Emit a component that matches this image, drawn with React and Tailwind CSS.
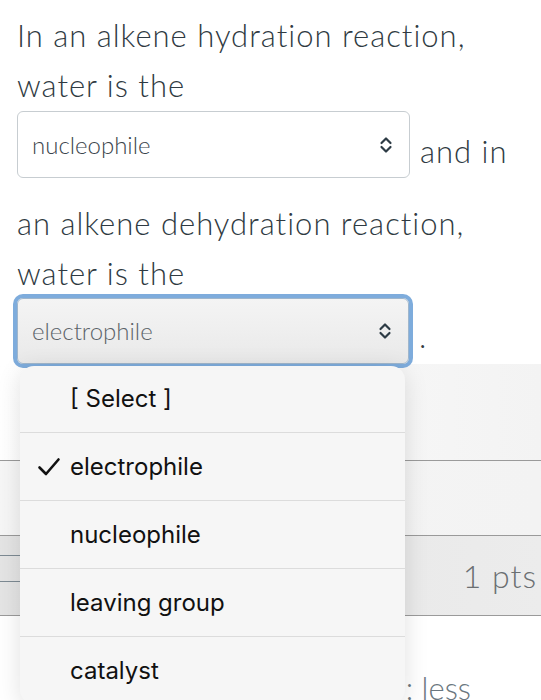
import { useState } from "react";

function Chevrons() {
    return (
        <svg width="16" height="20" viewBox="0 0 16 20" fill="none">
            <path d="M3.5 8 L8 3.5 L12.5 8" stroke="#2d3b45" strokeWidth="2.2" strokeLinecap="round" strokeLinejoin="round" />
            <path d="M3.5 12 L8 16.5 L12.5 12" stroke="#2d3b45" strokeWidth="2.2" strokeLinecap="round" strokeLinejoin="round" />
        </svg>
    );
}

function Check() {
    return (
        <svg width="24" height="20" viewBox="0 0 24 20" fill="none">
            <path d="M2.5 10.5 L9 17 L21.5 2.5" stroke="#111" strokeWidth="2.6" strokeLinecap="round" strokeLinejoin="round" />
        </svg>
    );
}

const options = ["[ Select ]", "electrophile", "nucleophile", "leaving group", "catalyst"];

export default function App() {
    const [selected] = useState("electrophile");
    const line = "text-[31px] leading-[50px] font-light tracking-[1px]";

    return (
        <div className="relative w-[541px] h-[700px] overflow-hidden bg-white font-['Lato',sans-serif] text-[#2f3a42]">
            {/* Question text */}
            <div className="px-[17px] pt-[10px]">
                <div className={line}>In an alkene hydration reaction,</div>
                <div className={line}>water is the</div>
                <div className="flex items-end mt-[1px]">
                    <div className="flex items-center justify-between w-[393px] h-[67px] pl-[14px] pr-[15px] bg-white border border-[#c7cdd1] rounded-[6px]">
                        <span className="text-[24px] font-light text-[#3b454c]">nucleophile</span>
                        <Chevrons />
                    </div>
                    <span className={`ml-[10px] mb-[2px] ${line}`}>and in</span>
                </div>
                <div className={`mt-[20px] ${line}`}>an alkene dehydration reaction,</div>
                <div className={line}>water is the</div>
                <div className="flex items-end">
                    <div className="flex items-center justify-between w-[392px] h-[66px] pl-[14px] pr-[15px] bg-gradient-to-b from-[#f4f4f4] to-[#e9e9e9] border border-[#9fb6cc] rounded-[6px] ring-4 ring-[#7eacdc]">
                        <span className="text-[24px] font-light text-[#5b6369]">electrophile</span>
                        <Chevrons />
                    </div>
                    <span className={`ml-[10px] mb-[3px] ${line}`}>.</span>
                </div>
            </div>

            {/* Page content behind the menu */}
            <div className="h-[97px] border-b border-[#9a9a9a] bg-gradient-to-r from-white to-[#f3f3f3]"></div>
            <div className="h-[74px] bg-gradient-to-r from-[#f6f6f6] to-[#f3f3f3]"></div>
            <div className="flex justify-between h-[81px] border-t border-b border-[#9a9a9a] bg-gradient-to-r from-[#e4e4e4] to-[#ececec]">
                <div className="w-[20px] mt-[19px] h-[27px] border-t border-b border-[#7d8a93]"></div>
                <span className="self-center pr-[4px] text-[32px] font-light tracking-[1px] text-[#6b6f72]">1 pts</span>
            </div>
            <div className="flex justify-end pr-[70px] pt-[52px] text-[31px] leading-[40px] font-light text-[#6b7780]">
                <span>: less</span>
            </div>

            {/* Open select menu */}
            <div className="absolute left-[20px] top-[366px] w-[385px] rounded-[14px] bg-[#f6f6f6] shadow-[0_4px_24px_rgba(0,0,0,0.12)] font-['Inter',sans-serif] text-[24px] text-[#111]">
                {options.map((opt, i) => (
                    <div
                        key={opt}
                        className={`flex items-center ${i === 0 ? "h-[66px]" : "h-[68px] border-t border-[#dcdcdc]"}`}
                    >
                        <div className="w-[50px] pl-[17px] flex items-center">
                            {opt === selected && <Check />}
                        </div>
                        <span>{opt}</span>
                    </div>
                ))}
            </div>
        </div>
    );
}
